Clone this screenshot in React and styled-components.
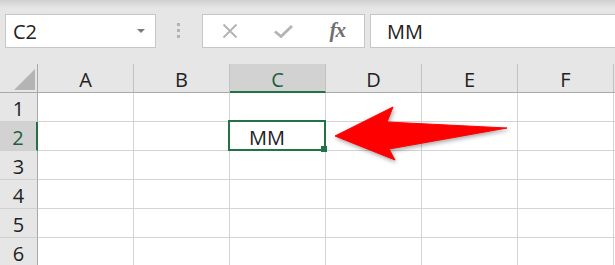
import styled, { createGlobalStyle } from "styled-components";

const GlobalStyle = createGlobalStyle`
  html, body {
    margin: 0;
    padding: 0;
    background: #ffffff;
    overflow: hidden;
  }
  * {
    box-sizing: border-box;
  }
`;

const Page = styled.div`
  position: relative;
  width: 615px;
  height: 265px;
  overflow: hidden;
  font-family: "Open Sans", "Noto Sans", sans-serif;
  color: #222222;
`;

const Toolbar = styled.div`
  display: flex;
  align-items: flex-start;
  height: 64px;
  padding: 14px 0 0 5px;
  overflow: hidden;
  background: linear-gradient(#d0d0d0 0px, #e6e6e6 8px, #e6e6e6 100%);

  & > * {
    flex-shrink: 0;
  }
`;

const NameBox = styled.div`
  display: flex;
  align-items: center;
  justify-content: space-between;
  width: 151px;
  height: 34px;
  padding: 0 10px 0 7px;
  background: #ffffff;
  border: 1px solid #c6c6c6;
  font-size: 20px;
`;

const Caret = styled.span`
  width: 0;
  height: 0;
  border-left: 4px solid transparent;
  border-right: 4px solid transparent;
  border-top: 4px solid #7a7a7a;
`;

const Grip = styled.div`
  display: flex;
  flex-direction: column;
  gap: 3px;
  margin: 9px 22px 0 21px;

  span {
    width: 3px;
    height: 3px;
    background: #b3b3b3;
  }
`;

const IconBox = styled.div`
  display: grid;
  grid-template-columns: repeat(3, 1fr);
  align-items: center;
  justify-items: center;
  width: 163px;
  height: 34px;
  background: #ffffff;
  border: 1px solid #c6c6c6;
`;

const Fx = styled.span`
  font-family: "Liberation Serif", "DejaVu Serif", serif;
  font-style: italic;
  font-weight: 700;
  font-size: 21px;
  color: #707070;
  letter-spacing: -1px;
  margin-top: -2px;
`;

const FormulaInput = styled.div`
  display: flex;
  align-items: center;
  width: 260px;
  height: 34px;
  margin-left: 5px;
  padding-left: 16px;
  background: #ffffff;
  border: 1px solid #c6c6c6;
  font-size: 20px;
`;

const Sheet = styled.div`
  display: grid;
  grid-template-columns: 38px repeat(7, 96px);
  grid-auto-rows: 29px;
`;

const Corner = styled.div`
  display: flex;
  align-items: flex-end;
  justify-content: flex-end;
  padding: 0 2px 2px 0;
  background: #e6e6e6;
  border-right: 1px solid #a8a8a8;
  border-bottom: 1px solid #a8a8a8;

  span {
    width: 21px;
    height: 21px;
    background: #b4b4b4;
    clip-path: polygon(100% 0, 100% 100%, 0 100%);
  }
`;

const ColHeader = styled.div`
  display: flex;
  align-items: center;
  justify-content: center;
  padding-top: 3px;
  font-size: 20px;
  background: ${(p) => (p.$active ? "#d2d2d2" : "#e6e6e6")};
  color: ${(p) => (p.$active ? "#1e5e3e" : "#222222")};
  border-right: 1px solid #c2c2c2;
  border-bottom: ${(p) => (p.$active ? "2px solid #217346" : "1px solid #a8a8a8")};
`;

const RowHeader = styled.div`
  display: flex;
  align-items: center;
  justify-content: center;
  padding-top: 2px;
  font-size: 20px;
  background: ${(p) => (p.$active ? "#d2d2d2" : "#e6e6e6")};
  color: ${(p) => (p.$active ? "#1e5e3e" : "#222222")};
  border-right: ${(p) => (p.$active ? "2px solid #217346" : "1px solid #a8a8a8")};
  border-bottom: 1px solid #cfcfcf;
`;

const Cell = styled.div`
  position: relative;
  display: flex;
  align-items: center;
  padding: 3px 0 0 19px;
  font-size: 20px;
  background: #ffffff;
  border-right: 1px solid #d4d4d4;
  border-bottom: 1px solid #d4d4d4;

  ${(p) =>
    p.$selected &&
    `
    &::after {
      content: "";
      position: absolute;
      top: -2px;
      left: -2px;
      right: -1px;
      bottom: -1px;
      border: 2px solid #217346;
      pointer-events: none;
    }
  `}
`;

const FillHandle = styled.span`
  position: absolute;
  right: -2px;
  bottom: -2px;
  width: 6px;
  height: 6px;
  background: #217346;
  z-index: 2;
`;

const Arrow = styled.svg`
  position: absolute;
  left: 0;
  top: 0;
  filter: drop-shadow(1px 2px 2px rgba(0, 0, 0, 0.35));
`;

const columns = ["A", "B", "C", "D", "E", "F", ""];
const rows = [1, 2, 3, 4, 5, 6];
const activeCol = "C";
const activeRow = 2;
const cells = { C2: "MM" };

export default function App() {
  return (
    <Page>
      <GlobalStyle />
      <Toolbar>
        <NameBox>
          C2
          <Caret />
        </NameBox>
        <Grip>
          <span />
          <span />
          <span />
        </Grip>
        <IconBox>
          <svg width="16" height="16" viewBox="0 0 16 16">
            <path d="M1.5 1.5 L14.5 14.5 M14.5 1.5 L1.5 14.5" stroke="#b3b3b3" strokeWidth="1.8" fill="none" />
          </svg>
          <svg width="19" height="13" viewBox="0 0 19 13">
            <path d="M1 6.5 L7 11.5 L18 1" stroke="#b3b3b3" strokeWidth="2.8" fill="none" />
          </svg>
          <Fx>fx</Fx>
        </IconBox>
        <FormulaInput>MM</FormulaInput>
      </Toolbar>

      <Sheet>
        <Corner>
          <span />
        </Corner>
        {columns.map((c, i) => (
          <ColHeader key={i} $active={c === activeCol}>
            {c}
          </ColHeader>
        ))}
        {rows.map((r) => [
          <RowHeader key={`h${r}`} $active={r === activeRow}>
            {r}
          </RowHeader>,
          ...columns.map((c, i) => {
            const id = `${c}${r}`;
            const selected = c === activeCol && r === activeRow;
            return (
              <Cell key={`${r}-${i}`} $selected={selected}>
                {cells[id]}
                {selected && <FillHandle />}
              </Cell>
            );
          }),
        ])}
      </Sheet>

      <Arrow width="615" height="265" viewBox="0 0 615 265">
        <polygon
          points="335,136 393,107 387,122 507,128 389,149 395,160"
          fill="#ff0000"
          stroke="#ff0000"
          strokeWidth="1"
          strokeLinejoin="round"
        />
      </Arrow>
    </Page>
  );
}
